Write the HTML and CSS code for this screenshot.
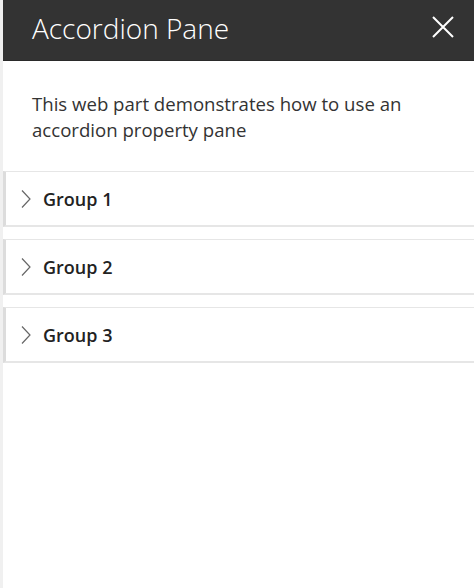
FILE: index.html
```html
<!DOCTYPE html>
<html>
<head>
<meta charset="utf-8">
<link rel="stylesheet" href="styles.css">
</head>
<body>
<div class="pane">
  <header class="pane-header">
    <h1 class="pane-title">Accordion Pane</h1>
    <button class="close" aria-label="Close">
      <svg width="22" height="22" viewBox="0 0 22 22"><path d="M1 1 L21 21 M21 1 L1 21" stroke="#fff" stroke-width="2" fill="none"/></svg>
    </button>
  </header>
  <p class="desc">This web part demonstrates how to use an accordion property pane</p>
  <div class="groups">
    <div class="group"><svg class="chev" width="10" height="18" viewBox="0 0 10 18"><path d="M1 0.5 L9 9 L1 17.5" stroke="#666" stroke-width="1.2" fill="none"/></svg><span class="group-title">Group 1</span></div>
    <div class="group"><svg class="chev" width="10" height="18" viewBox="0 0 10 18"><path d="M1 0.5 L9 9 L1 17.5" stroke="#666" stroke-width="1.2" fill="none"/></svg><span class="group-title">Group 2</span></div>
    <div class="group"><svg class="chev" width="10" height="18" viewBox="0 0 10 18"><path d="M1 0.5 L9 9 L1 17.5" stroke="#666" stroke-width="1.2" fill="none"/></svg><span class="group-title">Group 3</span></div>
  </div>
</div>
</body>
</html>
```
FILE: styles.css
```css
html, body {
  margin: 0;
  padding: 0;
  background: #fff;
}
body {
  font-family: "Open Sans", "Noto Sans", sans-serif;
  color: #333;
}
.pane {
  min-height: 588px;
  border-left: 3px solid #f0f0f0;
  box-sizing: border-box;
}
.pane-header {
  height: 61px;
  background: #333;
  border-bottom: 1px solid #2a2a2a;
  display: flex;
  align-items: center;
  justify-content: space-between;
  padding: 0 20px 0 29px;
  box-sizing: border-box;
}
.pane-title {
  margin: 0;
  font-weight: 300;
  font-size: 28px;
  color: #fff;
  line-height: 36px;
  padding-bottom: 4px;
}
.close {
  background: none;
  border: 0;
  padding: 0;
  margin: 0 0 6px 0;
  display: flex;
}
.desc {
  margin: 30px 50px 28px 29px;
  font-size: 18.6px;
  line-height: 26px;
  color: #333;
}
.groups {
  display: flex;
  flex-direction: column;
  gap: 12px;
}
.group {
  height: 56px;
  box-sizing: border-box;
  border-top: 1px solid #e6e6e6;
  border-bottom: 2px solid #e6e6e6;
  border-left: 3px solid #dcdcdc;
  display: flex;
  align-items: center;
  padding-left: 15px;
}
.chev {
  margin-right: 12px;
}
.group-title {
  font-size: 18px;
  font-weight: 600;
  color: #222;
}
```
